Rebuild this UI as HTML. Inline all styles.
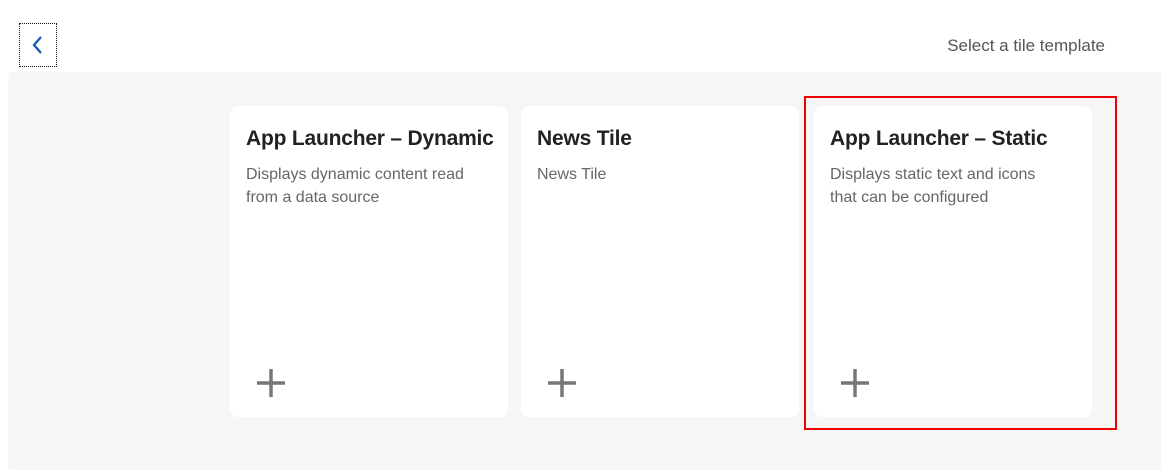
<!DOCTYPE html>
<html><head><style>
body{margin:0;width:1161px;height:470px;background:#fff;font-family:"Liberation Sans",sans-serif;position:relative;overflow:hidden}
.bg{position:absolute;left:9px;top:74px;width:1152px;height:396px;background:#f6f6f6;box-shadow:0 -1px 2px rgba(0,0,0,.06)}
.back{position:absolute;left:19px;top:23px;width:36px;height:42px;border:1.5px dotted #111}
.hdr{position:absolute;right:56px;top:36px;font-size:17px;color:#555}
.card{position:absolute;top:106px;width:278px;height:311px;background:#fff;border-radius:8px}
.card h3{margin:0;position:absolute;left:16px;top:21px;font-size:21px;font-weight:bold;color:#222;white-space:nowrap;letter-spacing:-.2px}
.card p{margin:0;position:absolute;left:16px;top:57px;font-size:16px;line-height:23px;color:#666;width:228px}
.card svg{position:absolute;left:25px;top:261px}
.red{position:absolute;left:804px;top:96px;width:309px;height:330px;border:2px solid #e00}
</style></head><body>
<div class="bg"></div>
<div class="back"><svg width="36" height="42"><path d="M21 13 L14 21 L21 29" fill="none" stroke="#0a5bb5" stroke-width="2.2"/></svg></div>
<div class="hdr">Select a tile template</div>
<div class="card" style="left:230px"><h3>App Launcher – Dynamic</h3><p>Displays dynamic content read from a data source</p><svg width="32" height="32"><path d="M16 2V30M2 16H30" stroke="#777" stroke-width="3.5"/></svg></div>
<div class="card" style="left:521px"><h3>News Tile</h3><p>News Tile</p><svg width="32" height="32"><path d="M16 2V30M2 16H30" stroke="#777" stroke-width="3.5"/></svg></div>
<div class="card" style="left:814px"><h3>App Launcher – Static</h3><p>Displays static text and icons that can be configured</p><svg width="32" height="32"><path d="M16 2V30M2 16H30" stroke="#777" stroke-width="3.5"/></svg></div>
<div class="red"></div>
</body></html>
